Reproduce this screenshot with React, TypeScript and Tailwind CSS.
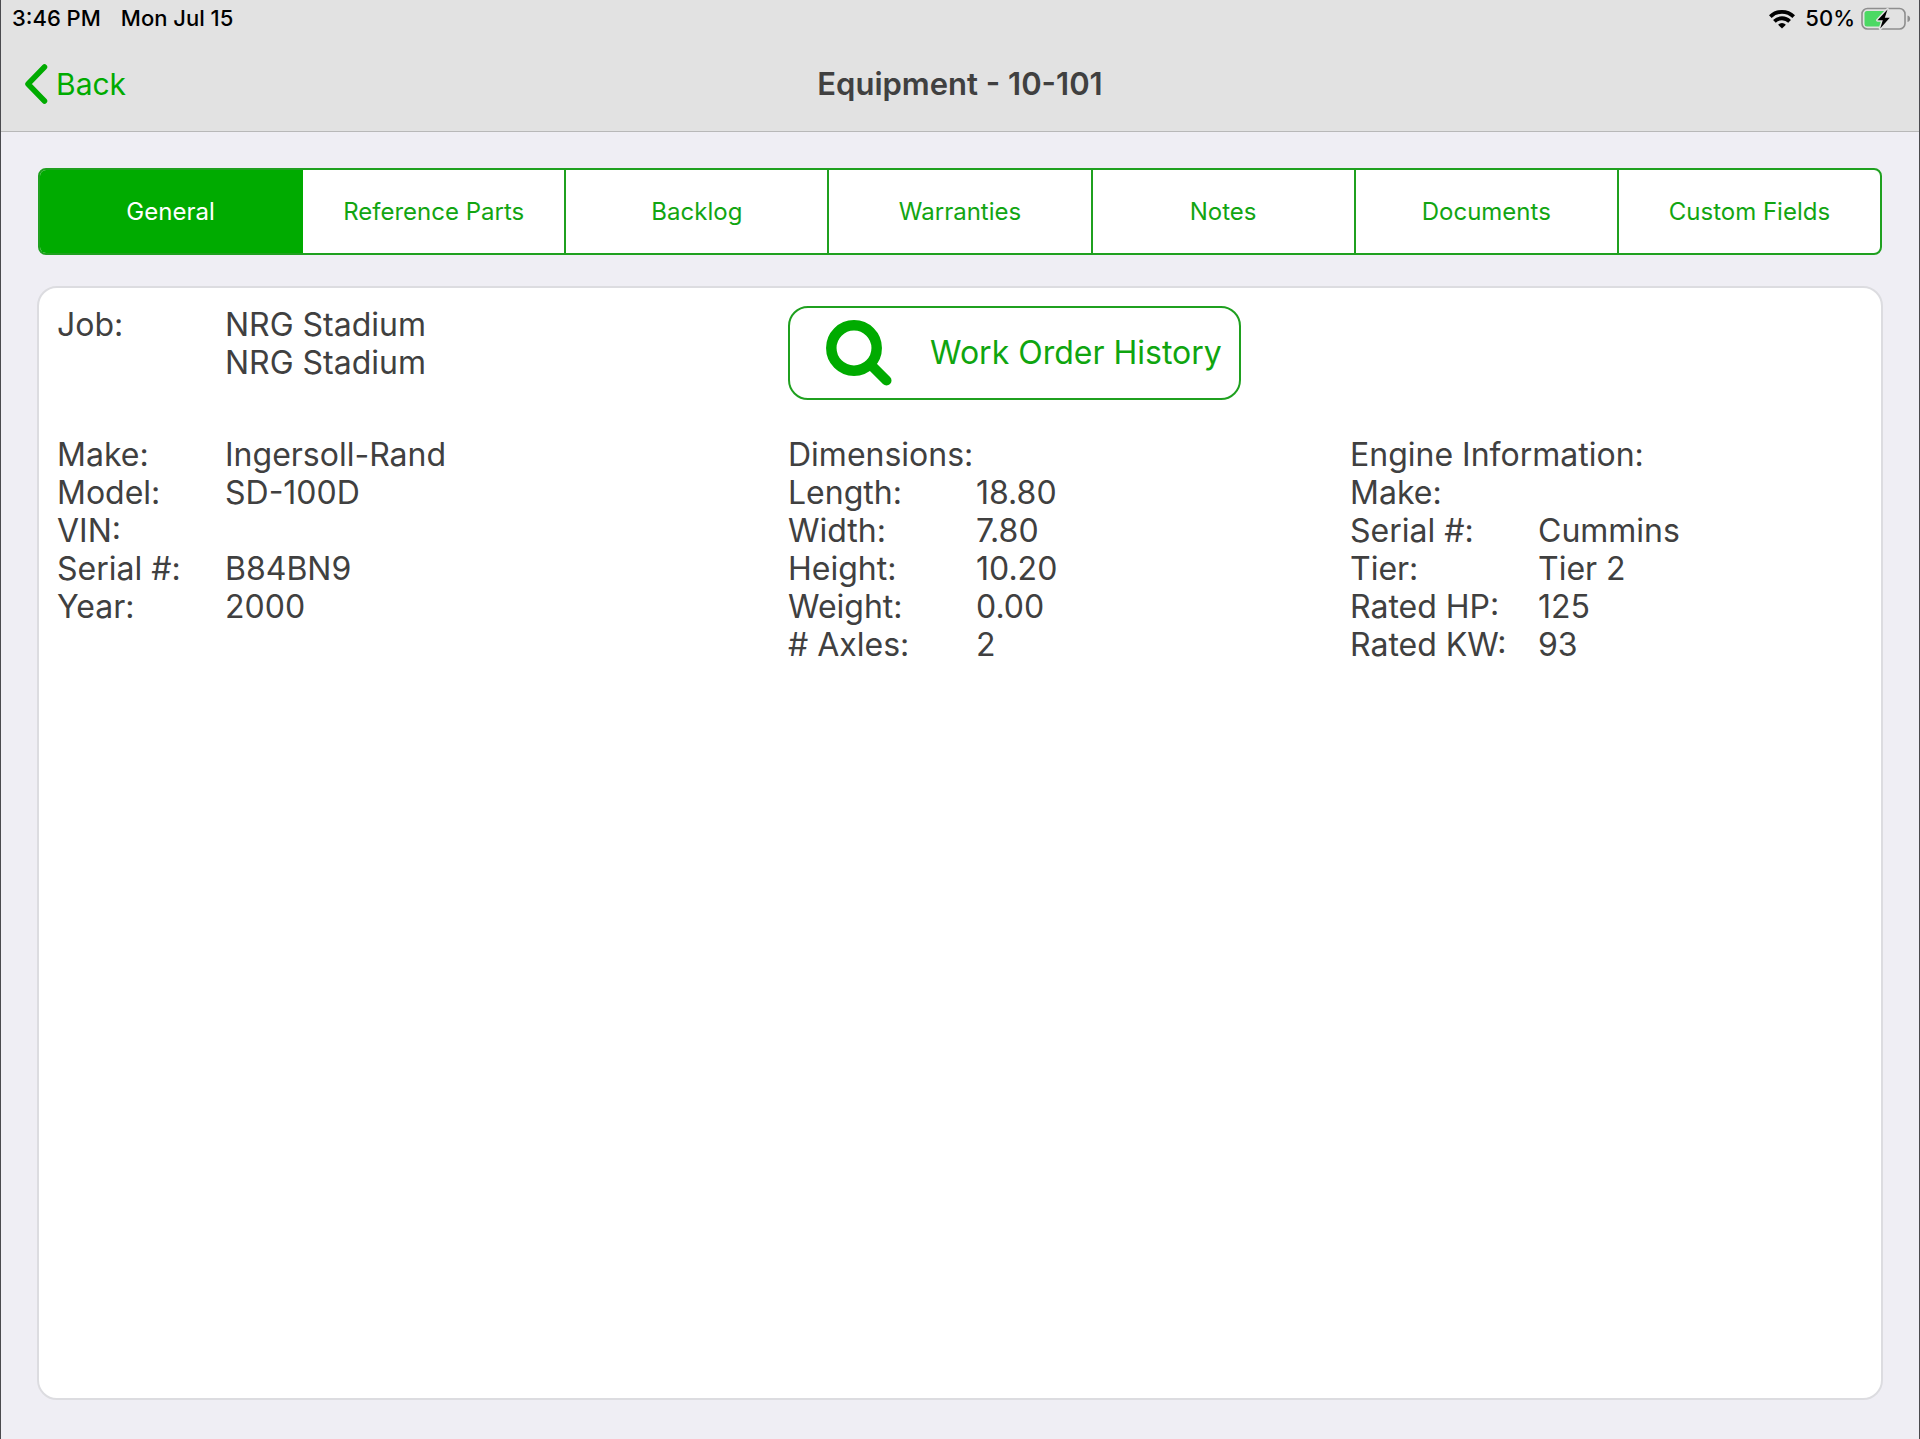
import { useState } from 'react'

type Field = {
  label: string
  value?: string
}

const tabs = ['General', 'Reference Parts', 'Backlog', 'Warranties', 'Notes', 'Documents', 'Custom Fields']

const identity: Field[] = [
  { label: 'Make:', value: 'Ingersoll-Rand' },
  { label: 'Model:', value: 'SD-100D' },
  { label: 'VIN:' },
  { label: 'Serial #:', value: 'B84BN9' },
  { label: 'Year:', value: '2000' },
]

const dimensions: Field[] = [
  { label: 'Length:', value: '18.80' },
  { label: 'Width:', value: '7.80' },
  { label: 'Height:', value: '10.20' },
  { label: 'Weight:', value: '0.00' },
  { label: '# Axles:', value: '2' },
]

const engine: Field[] = [
  { label: 'Make:' },
  { label: 'Serial #:', value: 'Cummins' },
  { label: 'Tier:', value: 'Tier 2' },
  { label: 'Rated HP:', value: '125' },
  { label: 'Rated KW:', value: '93' },
]

function WifiIcon() {
  return (
    <svg width="26" height="20" viewBox="0 0 26 20" fill="none" stroke="#000" strokeWidth="3.8" aria-hidden="true">
      <path d="M1.3 7.6a16.6 16.6 0 0 1 23.4 0" />
      <path d="M5.4 12.4a10.8 10.8 0 0 1 15.2 0" />
      <path d="M13 19.6l-3.9-3.9a5.5 5.5 0 0 1 7.8 0z" fill="#000" stroke="none" />
    </svg>
  )
}

function BatteryIcon() {
  return (
    <svg width="50" height="24" viewBox="0 0 50 24" aria-hidden="true">
      <rect x="1" y="1.5" width="43" height="20.5" rx="5.5" fill="none" stroke="#8e8e8e" strokeWidth="1.6" />
      <path d="M46.5 8.5c2 .6 2.6 1.8 2.6 3.3s-.6 2.7-2.6 3.3z" fill="#8e8e8e" />
      <path d="M6 4h17v15.5H6A2.5 2.5 0 0 1 3.5 17V6.5A2.5 2.5 0 0 1 6 4z" fill="#4cd964" />
      <path
        d="M26.5 2.5L16.5 13.2h5.3l-2.6 8.3L28.8 10.7h-5z"
        fill="#000"
        stroke="#e2e2e2"
        strokeWidth="3"
        paintOrder="stroke"
        strokeLinejoin="round"
      />
    </svg>
  )
}

function SearchIcon() {
  return (
    <svg width="66" height="66" viewBox="0 0 66 66" fill="none" stroke="#00ab00" aria-hidden="true">
      <circle cx="28" cy="28" r="22.7" strokeWidth="10.5" />
      <path d="M46 46l14.5 14.5" strokeWidth="10" strokeLinecap="round" />
    </svg>
  )
}

function FieldList({ title, fields, labelWidth }: { title?: string; fields: Field[]; labelWidth: string }) {
  return (
    <section>
      {title && <h2>{title}</h2>}
      <dl>
        {fields.map((field) => (
          <div key={field.label} className="flex">
            <dt className={`${labelWidth} shrink-0`}>{field.label}</dt>
            <dd>{field.value}</dd>
          </div>
        ))}
      </dl>
    </section>
  )
}

export default function App() {
  const [active, setActive] = useState('General')

  return (
    <div className="flex min-h-screen flex-col border-x border-[#4a4a4e] bg-[#efeef4] font-['Inter',sans-serif] text-[#404040]">
      <header className="border-b border-[#b8b8b8] bg-[#e2e2e2]">
        <div className="flex h-[37px] items-center justify-between pl-[11px] pr-2 text-[22px] font-medium text-black">
          <div className="flex gap-5">
            <span>3:46 PM</span>
            <span>Mon Jul 15</span>
          </div>
          <div className="flex items-center gap-1.5">
            <WifiIcon />
            <span className="pl-1">50%</span>
            <BatteryIcon />
          </div>
        </div>
        <nav className="grid h-[94px] grid-cols-3 items-center px-[23px] text-[30px]">
          <a href="#back" className="flex items-center gap-2 justify-self-start text-[#00ab00]">
            <svg width="24" height="40" viewBox="0 0 24 40" fill="none" aria-hidden="true">
              <path d="M20.5 3L4 20l16.5 17" stroke="#00ab00" strokeWidth="5.5" strokeLinecap="round" strokeLinejoin="round" />
            </svg>
            Back
          </a>
          <h1 className="text-center text-[31px] font-semibold">Equipment - 10-101</h1>
        </nav>
      </header>

      <main className="flex flex-1 flex-col gap-[31px] px-9 pb-[39px] pt-9">
        <div role="tablist" className="mx-px flex h-[87px] overflow-hidden rounded-lg border-2 border-[#1fa01f] bg-white">
          {tabs.map((tab) => (
            <button
              key={tab}
              type="button"
              role="tab"
              aria-selected={tab === active}
              onClick={() => setActive(tab)}
              className={`flex-1 border-r-2 text-2xl last:border-r-0 ${
                tab === active ? 'border-[#00ab00] bg-[#00ab00] text-white' : 'border-[#1fa01f] text-[#12a512]'
              }`}
            >
              {tab}
            </button>
          ))}
        </div>

        <div className="flex-1 rounded-[20px] border-2 border-[#dcdce0] bg-white px-[18px] py-[18px] text-[32px] leading-[38px]">
          <div className="grid grid-cols-[731fr_562fr_513fr] gap-y-9">
            <dl className="flex">
              <dt className="w-42 shrink-0">Job:</dt>
              <dd>
                NRG Stadium
                <br />
                NRG Stadium
              </dd>
            </dl>
            <div className="col-span-2">
              <button
                type="button"
                className="flex h-[94px] items-center gap-[38px] rounded-[20px] border-2 border-[#1fa01f] pl-9 pr-[17px] text-[#0fa50f]"
              >
                <SearchIcon />
                Work Order History
              </button>
            </div>
            <FieldList fields={identity} labelWidth="w-42" />
            <FieldList title="Dimensions:" fields={dimensions} labelWidth="w-47" />
            <FieldList title="Engine Information:" fields={engine} labelWidth="w-47" />
          </div>
        </div>
      </main>
    </div>
  )
}
